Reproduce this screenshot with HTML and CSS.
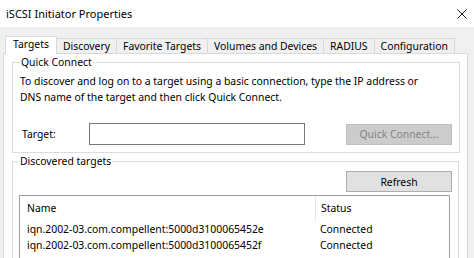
FILE: index.html
```html
<!DOCTYPE html>
<html lang="en">
<head>
    <meta charset="UTF-8">
    <title>iSCSI Initiator Properties</title>
    <link rel="stylesheet" href="styles.css">
</head>
<body>

<div class="window">
    <!-- Title Bar -->
    <div class="titlebar">
        <span class="title">iSCSI Initiator Properties</span>
        <svg class="close" width="10" height="10" viewBox="0 0 10 10">
            <path d="M0.5 0.5 L9.5 9.5 M9.5 0.5 L0.5 9.5" stroke="#222" stroke-width="1" fill="none"/>
        </svg>
    </div>

    <div class="dialog">
        <!-- Tabs -->
        <div class="tabs">
            <div class="tab selected">Targets</div>
            <div class="tab">Discovery</div>
            <div class="tab">Favorite Targets</div>
            <div class="tab">Volumes and Devices</div>
            <div class="tab">RADIUS</div>
            <div class="tab">Configuration</div>
        </div>

        <div class="panel">
            <!-- Quick Connect -->
            <fieldset class="group quick">
                <legend>Quick Connect</legend>
                <p class="hint">To discover and log on to a target using a basic connection, type the IP address or<br>DNS name of the target and then click Quick Connect.</p>
                <div class="target-row">
                    <label for="target">Target:</label>
                    <input type="text" id="target">
                    <button class="btn" disabled>Quick Connect...</button>
                </div>
            </fieldset>

            <!-- Discovered targets -->
            <fieldset class="group discovered">
                <legend>Discovered targets</legend>
                <div class="actions">
                    <button class="btn">Refresh</button>
                </div>
                <div class="list">
                    <div class="list-head">
                        <div class="col-name">Name</div>
                        <div class="col-status">Status</div>
                    </div>
                    <div class="list-row">
                        <div class="col-name">iqn.2002-03.com.compellent:5000d3100065452e</div>
                        <div class="col-status">Connected</div>
                    </div>
                    <div class="list-row">
                        <div class="col-name">iqn.2002-03.com.compellent:5000d3100065452f</div>
                        <div class="col-status">Connected</div>
                    </div>
                    <div class="list-row"></div>
                </div>
            </fieldset>
        </div>
    </div>
</div>

</body>
</html>
```

FILE: styles.css
```css
/* General Page Styling */
html, body {
    margin: 0;
    padding: 0;
    height: 258px;
    overflow: hidden;
}

body {
    font-family: "Noto Sans", "Open Sans", sans-serif;
    font-size: 10.4px;
    color: #000;
    background: #f0f0f0;
}

/* Title Bar */
.titlebar {
    height: 27px;
    background: #fff;
    display: flex;
    align-items: center;
    justify-content: space-between;
    padding: 0 6px 0 6px;
}

.title {
    font-size: 11px;
    color: #000;
}

.close {
    margin-right: 1px;
}

/* Dialog body */
.dialog {
    padding: 10px 6px 0 3px;
}

/* Tabs */
.tabs {
    display: flex;
    align-items: flex-end;
    height: 16px;
    padding-left: 2px;
}

.tab {
    height: 14px;
    line-height: 14px;
    padding: 0 6px;
    background: #f0f0f0;
    border: 1px solid #d9d9d9;
    border-bottom: none;
    margin-left: -1px;
    white-space: nowrap;
}

.tab.selected {
    height: 17px;
    line-height: 15px;
    padding: 0 7px;
    background: #fff;
    position: relative;
    z-index: 1;
    margin-left: 0;
    margin-bottom: -1px;
}

/* Panel */
.panel {
    background: #fff;
    border: 1px solid #d9d9d9;
    height: 230px;
    padding: 1px 8px 0 8px;
}

/* Group boxes */
.group {
    margin: 0;
    border: 1px solid #dcdcdc;
    padding: 0 7px 7px 7px;
}

.group legend {
    padding: 0 1px;
    line-height: 15px;
}

.hint {
    margin: 3px 0 0 0;
    line-height: 16px;
}

.target-row {
    display: flex;
    align-items: center;
    margin-top: 18px;
}

.target-row label {
    width: 67px;
    margin-left: 2px;
}

.target-row input {
    width: 216px;
    height: 22px;
    box-sizing: border-box;
    border: 1px solid #7a7a7a;
    margin: 0 41px 0 0;
    padding: 0 3px;
}

/* Buttons */
.btn {
    width: 106px;
    height: 21px;
    font-family: inherit;
    font-size: 10.4px;
    background: #e1e1e1;
    border: 1px solid #adadad;
    color: #000;
    padding: 0;
}

.btn:disabled {
    background: #cccccc;
    border-color: #bfbfbf;
    color: #838383;
}

.discovered {
    margin-top: 1px;
    padding: 0 6px 0 6px;
    height: 120px;
}

.actions {
    display: flex;
    justify-content: flex-end;
    margin-top: 2px;
}

/* List */
.list {
    margin: 3px 2px 0 0;
    border: 1px solid #a0a0a0;
    height: 80px;
}

.list-head,
.list-row {
    display: flex;
}

.list-head {
    height: 25px;
    line-height: 25px;
}

.list-row {
    height: 16px;
    line-height: 16px;
}

.col-name {
    width: 288px;
    padding-left: 7px;
}

.col-status {
    padding-left: 5px;
}

.list-head .col-status {
    border-left: 1px solid #e5e5e5;
}
```
